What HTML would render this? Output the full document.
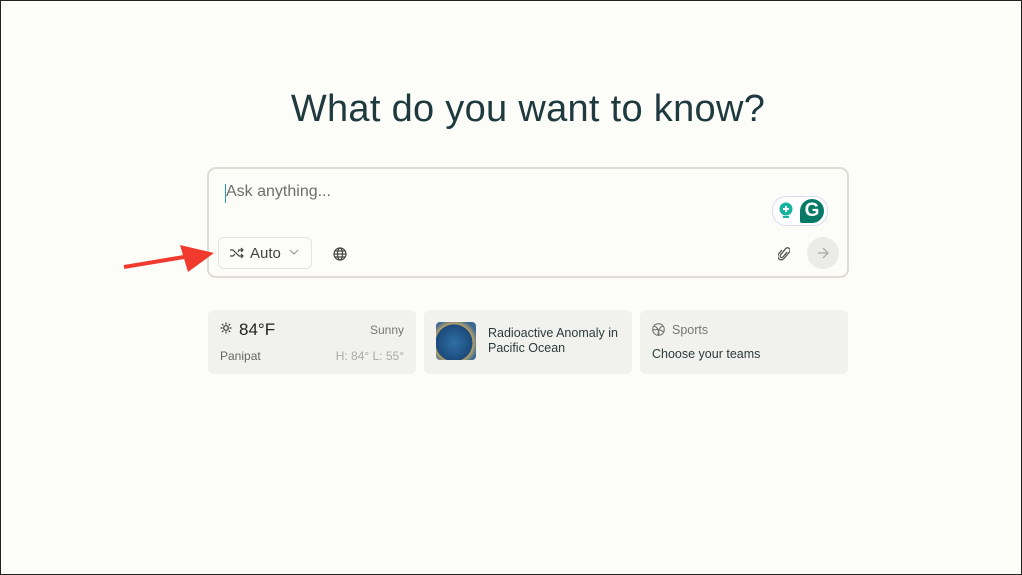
<!DOCTYPE html>
<html><head><style>
html,body{margin:0;padding:0}
body{width:1022px;height:575px;background:#fcfcf9;font-family:"Liberation Sans",sans-serif;position:relative;overflow:hidden}
.frame{position:absolute;left:0;top:0;width:1020px;height:573px;border:1px solid #222;pointer-events:none}
.abs{position:absolute}
h1{position:absolute;left:0;width:1056px;top:88px;margin:0;text-align:center;font-weight:400;font-size:38px;color:#1f3a3f;letter-spacing:0.3px}
.box{left:207px;top:167px;width:638px;height:107px;border:2px solid #dddcd5;border-radius:9px;background:#fcfcf9}
.card{top:310px;width:208px;height:64px;background:#f1f1ed;border-radius:6px;font-size:13px;color:#2c3b3e}
</style></head><body>
<div class="frame"></div>
<h1>What do you want to know?</h1>
<div class="abs box">
  <div class="abs" style="left:16px;top:15px;width:1px;height:19px;background:#2a9db0"></div>
  <div class="abs" style="left:17px;top:14px;font-size:16px;color:#6d6d6a">Ask anything...</div>
  <div class="abs" style="left:563px;top:27px;width:54px;height:28px;border:1px solid #d9dcea;border-radius:14px;background:#fff"></div>
  <svg class="abs" style="left:570px;top:33px" width="14" height="18" viewBox="0 0 14 18"><circle cx="7" cy="7" r="6.5" fill="#15b3a0"/><path d="M7 4v6M4 7h6" stroke="#fff" stroke-width="2"/><rect x="4" y="14" width="6" height="2" fill="#15b3a0"/></svg>
  <div class="abs" style="left:591px;top:30px;width:24px;height:24px;border-radius:12px 12px 12px 2px;background:#077a67;color:#fff;font-weight:bold;font-size:19px;text-align:center;line-height:24px">G</div>
  <div class="abs" style="left:9px;top:68px;width:92px;height:30px;border:1px solid #e4e4de;border-radius:6px"></div>
  <svg class="abs" style="left:21px;top:78px" width="14" height="12" viewBox="0 0 14 12" fill="none" stroke="#444" stroke-width="1.2"><path d="M0 3h3l6 6h4M0 9h3l2-2M8 5l1-2h4M11 1l2 2-2 2M11 7l2 2-2 2"/></svg>
  <div class="abs" style="left:41px;top:76px;font-size:15px;color:#444">Auto</div>
  <svg class="abs" style="left:80px;top:80px" width="10" height="7" viewBox="0 0 10 7"><path d="M1 1l4 4 4-4" fill="none" stroke="#999" stroke-width="1.2"/></svg>
  <svg class="abs" style="left:124px;top:78px" width="14" height="14" viewBox="0 0 14 14" fill="none" stroke="#444" stroke-width="1.2"><circle cx="7" cy="7" r="6"/><ellipse cx="7" cy="7" rx="2.5" ry="6"/><path d="M1 7h12M2 4h10M2 10h10"/></svg>
  <svg class="abs" style="left:569px;top:77px" width="12" height="15" viewBox="0 0 12 15" fill="none" stroke="#555" stroke-width="1.3"><path d="M9 6l-4 5a1.6 1.6 0 0 1-2.5-2l5-6.2a2.5 2.5 0 0 1 4 3L6 12.5a3.5 3.5 0 0 1-5.5-4.4L4 4"/></svg>
  <div class="abs" style="left:598px;top:68px;width:32px;height:32px;border-radius:16px;background:#ebebe7"></div>
  <svg class="abs" style="left:608px;top:78px" width="12" height="12" viewBox="0 0 12 12" fill="none" stroke="#aaa" stroke-width="1.3"><path d="M1 6h10M6 1l5 5-5 5"/></svg>
</div>
<svg class="abs" style="left:122px;top:240px" width="92" height="32" viewBox="0 0 92 32"><path d="M2 27L62 17" stroke="#f03a2e" stroke-width="4"/><path d="M58 5L92 13 66 32Z" fill="#f03a2e"/></svg>
<div class="abs card" style="left:208px">
  <svg class="abs" style="left:12px;top:12px" width="12" height="12" viewBox="0 0 12 12" fill="none" stroke="#333" stroke-width="1.2"><circle cx="6" cy="6" r="2.3"/><path d="M6 0.5v2M6 9.5v2M0.5 6h2M9.5 6h2M2 2l1.4 1.4M8.6 8.6L10 10M2 10l1.4-1.4M8.6 3.4L10 2"/></svg>
  <div class="abs" style="left:31px;top:10px;font-size:17px;color:#222">84°F</div>
  <div class="abs" style="right:12px;top:13px;font-size:12px;color:#777">Sunny</div>
  <div class="abs" style="left:12px;top:39px;font-size:12px;color:#666">Panipat</div>
  <div class="abs" style="right:12px;top:39px;font-size:12px;color:#aaa">H: 84° L: 55°</div>
</div>
<div class="abs card" style="left:424px">
  <div class="abs" style="left:12px;top:12px;width:40px;height:38px;border-radius:4px;background:radial-gradient(circle at 45% 55%,#2f6fa6,#1c4a7a 60%,#b8a36a 62%,#3d6a93 80%)"></div>
  <div class="abs" style="left:64px;top:16px;font-size:12.5px;line-height:15px;color:#2c3b3e">Radioactive Anomaly in<br>Pacific Ocean</div>
</div>
<div class="abs card" style="left:640px">
  <svg class="abs" style="left:12px;top:13px" width="13" height="13" viewBox="0 0 13 13" fill="none" stroke="#777" stroke-width="1.1"><circle cx="6.5" cy="6.5" r="5.8"/><path d="M2 3c3 1 5 4 5 9M11 3c-3 1-5 4-5 9M1 7c4-1 8 0 11 2"/></svg>
  <div class="abs" style="left:32px;top:13px;font-size:12.5px;color:#777">Sports</div>
  <div class="abs" style="left:12px;top:37px;font-size:12.5px;color:#2c3b3e">Choose your teams</div>
</div>
</body></html>
